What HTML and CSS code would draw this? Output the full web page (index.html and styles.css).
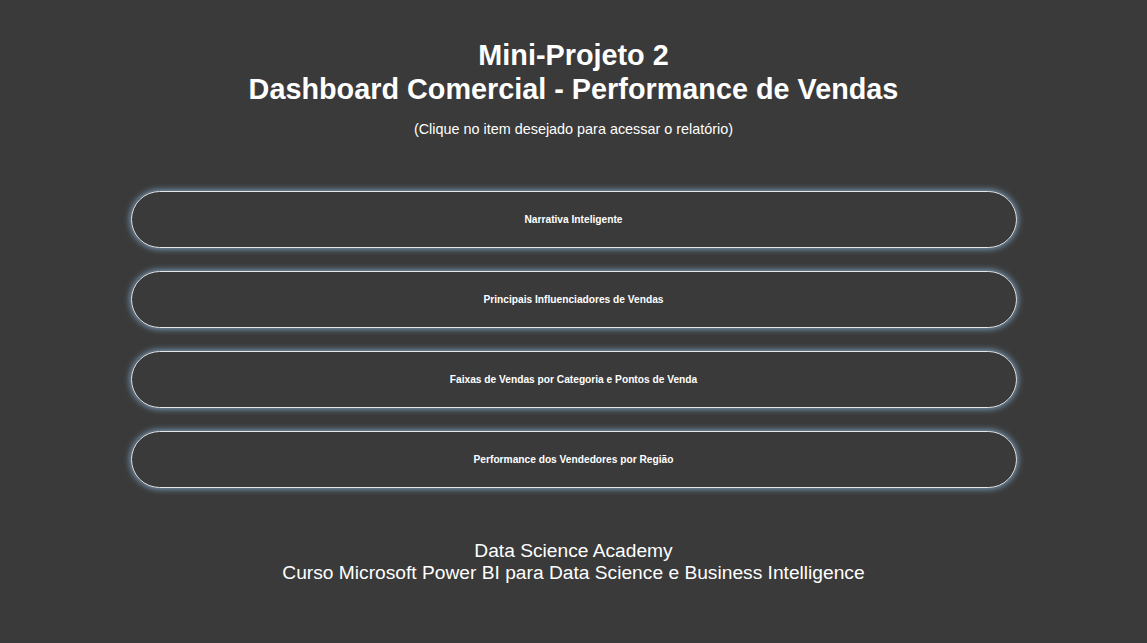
FILE: index.html
```html
<!DOCTYPE html>
<html lang="pt">
<head>
<meta charset="utf-8">
<title>Dashboard Comercial</title>
<link rel="stylesheet" href="styles.css">
</head>
<body>
<main class="page">
  <header class="header">
    <h1 class="title">Mini-Projeto 2<br>Dashboard Comercial - Performance de Vendas</h1>
    <p class="subtitle">(Clique no item desejado para acessar o relatório)</p>
  </header>
  <nav class="menu">
    <a class="item" href="#">Narrativa Inteligente</a>
    <a class="item" href="#">Principais Influenciadores de Vendas</a>
    <a class="item" href="#">Faixas de Vendas por Categoria e Pontos de Venda</a>
    <a class="item" href="#">Performance dos Vendedores por Região</a>
  </nav>
  <footer class="footer">
    <p class="footer-line">Data Science Academy</p>
    <p class="footer-line">Curso Microsoft Power BI para Data Science e Business Intelligence</p>
  </footer>
</main>
</body>
</html>
```
FILE: styles.css
```css
html, body {
  margin: 0;
  padding: 0;
  background: #3a3a3a;
  height: 100%;
}
body {
  font-family: "Liberation Sans", Arial, sans-serif;
  color: #ffffff;
}
.page {
  display: flex;
  flex-direction: column;
  align-items: center;
  padding-top: 38px;
}
.header {
  text-align: center;
}
.title {
  margin: 0;
  font-size: 28.8px;
  line-height: 34px;
  font-weight: bold;
}
.subtitle {
  margin: 14px 0 0;
  font-size: 14.4px;
  line-height: 18px;
}
.menu {
  margin-top: 53px;
  display: flex;
  flex-direction: column;
  gap: 23px;
}
.item {
  box-sizing: border-box;
  width: 886px;
  height: 57px;
  border: 1.5px solid #e6e6e6;
  border-radius: 29px;
  box-shadow: 0 0 6px 1px rgba(140, 185, 225, 0.8);
  display: flex;
  align-items: center;
  justify-content: center;
  color: #ffffff;
  text-decoration: none;
  font-size: 10.2px;
  font-weight: bold;
}
.footer {
  margin-top: 52px;
  text-align: center;
}
.footer-line {
  margin: 0;
  font-size: 19.2px;
  line-height: 22px;
}
```
